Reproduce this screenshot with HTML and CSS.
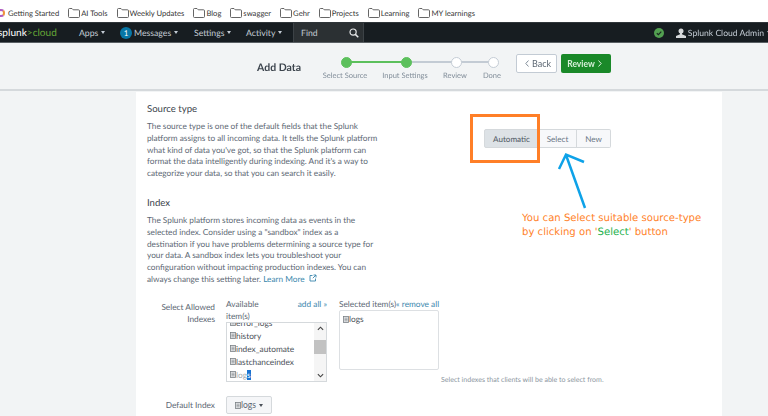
FILE: index.html
```html
<!DOCTYPE html>
<html lang="en">
<head>
<meta charset="utf-8">
<title>Add Data</title>
<link rel="stylesheet" href="styles.css">
</head>
<body>
<svg class="defs" width="0" height="0" aria-hidden="true">
  <symbol id="folder" viewBox="0 0 12 10"><path d="M.5 1.500Q.5.5 1.500.5H4L5.200 1.800H10.500Q11.500 1.800 11.500 2.800V8.500Q11.500 9.500 10.500 9.500H1.500Q.5 9.500.5 8.500Z" fill="none" stroke="#555" stroke-width=".9"/></symbol>
  <symbol id="doc" viewBox="0 0 6 7"><rect x=".5" y=".5" width="5" height="6" fill="#e4e6e8" stroke="#7a8085" stroke-width=".8"/><path d="M1.500 2.200h3M1.500 3.500h3M1.500 4.800h3" stroke="#7a8085" stroke-width=".6"/></symbol>
</svg>
<div class="bookmarks">
  <span class="mark first"><span class="ring"></span>Getting Started</span>
  <span class="mark"><svg class="folder"><use href="#folder"/></svg>AI Tools</span>
  <span class="mark"><svg class="folder"><use href="#folder"/></svg>Weekly Updates</span>
  <span class="mark"><svg class="folder"><use href="#folder"/></svg>Blog</span>
  <span class="mark"><svg class="folder"><use href="#folder"/></svg>swagger</span>
  <span class="mark"><svg class="folder"><use href="#folder"/></svg>Gehr</span>
  <span class="mark"><svg class="folder"><use href="#folder"/></svg>Projects</span>
  <span class="mark"><svg class="folder"><use href="#folder"/></svg>Learning</span>
  <span class="mark"><svg class="folder"><use href="#folder"/></svg>MY learnings</span>
</div>
<nav class="nav">
  <span class="logo">splunk<span class="logo-green">&gt;cloud</span></span>
  <span class="nav-item apps">Apps<i class="caret"></i></span>
  <span class="nav-item msgs"><span class="badge">1</span>Messages<i class="caret"></i></span>
  <span class="nav-item settings">Settings<i class="caret"></i></span>
  <span class="nav-item activity">Activity<i class="caret"></i></span>
  <span class="find">Find
    <svg class="search" viewBox="0 0 11 11"><circle cx="4.500" cy="4.500" r="3.400" fill="none" stroke="#e8eaeb" stroke-width="1.300"/><path d="M7 7l3.200 3.200" stroke="#e8eaeb" stroke-width="1.600"/></svg>
  </span>
  <span class="nav-right">
    <svg class="ok" viewBox="0 0 10 10"><circle cx="5" cy="5" r="5" fill="#53a051"/><path d="M2.800 5.200l1.600 1.500 2.900-3.100" fill="none" stroke="#1c2a20" stroke-width="1.200"/></svg>
    <svg class="user" viewBox="0 0 10 10"><circle cx="5" cy="3" r="2.500" fill="#d5d8da"/><path d="M4 5h2v1.200L10 8v2H0V8l4-1.800Z" fill="#d5d8da"/></svg>
    <span class="nav-item">Splunk Cloud Admin<i class="caret"></i></span>
  </span>
</nav>
<header class="head">
  <h1 class="title">Add Data</h1>
  <ol class="steps">
    <li class="step done">Select Source</li>
    <li class="step current">Input Settings</li>
    <li class="step third">Review</li>
    <li class="step last">Done</li>
  </ol>
  <button class="btn back"><svg class="chevron" viewBox="0 0 4 7"><path d="M3.500.5L.8 3.500l2.700 3" fill="none" stroke="#818d99"/></svg>Back</button>
  <button class="btn review">Review<svg class="chevron" viewBox="0 0 4 7"><path d="M.5.5l2.700 3-2.700 3" fill="none" stroke="#d8f0da"/></svg></button>
</header>
<main class="panel">
  <div class="cols">
    <section class="copy">
      <h2>Source type</h2>
      <p>The source type is one of the default fields that the Splunk platform assigns to all incoming data. It tells the Splunk platform what kind of data you've got, so that the Splunk platform can format the data intelligently during indexing. And it's a way to categorize your data, so that you can search it easily.</p>
      <h2 class="second">Index</h2>
      <p>The Splunk platform stores incoming data as events in the selected index. Consider using a "sandbox" index as a destination if you have problems determining a source type for your data. A sandbox index lets you troubleshoot your configuration without impacting production indexes. You can always change this setting later. <a class="link">Learn More <svg class="ext" viewBox="0 0 8 8"><path d="M6.500 4.500V7H1V1.500H3.500M4.500 1H7V3.500M7 1L3.800 4.200" fill="none" stroke="#3a87ad" stroke-width=".9"/></svg></a></p>
    </section>
    <div class="seg">
      <span class="seg-btn on">Automatic</span><span class="seg-btn sel">Select</span><span class="seg-btn new">New</span>
    </div>
  </div>
  <div class="form-row">
    <div class="label">Select Allowed Indexes</div>
    <div class="avail">
      <div class="avail-head"><span class="avail-title">Available item(s)</span><a class="link">add all »</a></div>
      <div class="listbox">
        <div class="items">
          <div class="item cut"><svg class="doc"><use href="#doc"/></svg>error_logs</div>
          <div class="item"><svg class="doc"><use href="#doc"/></svg>history</div>
          <div class="item"><svg class="doc"><use href="#doc"/></svg>index_automate</div>
          <div class="item"><svg class="doc"><use href="#doc"/></svg>lastchanceindex</div>
          <div class="item dim"><svg class="doc"><use href="#doc"/></svg>log<span class="hl">s</span></div>
        </div>
        <div class="scroll">
          <svg class="chev" viewBox="0 0 8 5"><path d="M1 4l3-3 3 3" fill="none" stroke="#444" stroke-width="1.300"/></svg>
          <span class="thumb"></span>
          <svg class="chev" viewBox="0 0 8 5"><path d="M1 1l3 3 3-3" fill="none" stroke="#444" stroke-width="1.300"/></svg>
        </div>
      </div>
    </div>
    <div class="chosen">
      <div class="chosen-head">Selected item(s)<a class="link">« remove all</a></div>
      <div class="chosen-box"><svg class="doc"><use href="#doc"/></svg>logs</div>
    </div>
    <div class="help">Select indexes that clients will be able to select from.</div>
  </div>
  <div class="form-row default">
    <div class="label">Default Index</div>
    <button class="btn pick"><svg class="doc"><use href="#doc"/></svg>logs<i class="caret dark"></i></button>
  </div>
  <div class="callout"></div>
  <svg class="arrow" viewBox="0 0 40 60"><path d="M35 57L16 4M9 18L16 3.500l18 7.500" fill="none" stroke="#0ea2e8" stroke-width="2.500"/></svg>
  <div class="note">You can Select suitable source-type<br>by clicking on '<span class="note-green">Select</span>' button</div>
</main>
</body>
</html>
```
FILE: styles.css
```css
* { box-sizing: border-box; }
html, body { margin: 0; height: 416px; overflow: hidden; }
body { background: #f2f4f5; font-family: "Lato", "Liberation Sans", sans-serif; color: #5c6773; width: 768px; filter: blur(.3px); text-rendering: geometricPrecision; }
.defs { position: absolute; }

.bookmarks { height: 22px; background: #fff; display: flex; align-items: center; padding: 4px 0 0 0; font-family: "Lato", sans-serif; font-size: 7.650px; color: #333; }
.mark { display: inline-flex; align-items: center; margin-right: 9px; white-space: nowrap; }
.mark.first { margin-left: -3px; }
.ring { width: 8px; height: 8px; border-radius: 50%; border: 2px solid #b05cc0; border-right-color: #f0913a; margin-right: 3px; }
.folder { width: 12px; height: 10px; margin-right: 1px; }

.nav { height: 21px; background: #171d21; border-top: 1px solid #30363a; border-bottom: 1px solid #5a6064; display: flex; align-items: center; font-size: 8.700px; color: #c3cbd4; white-space: nowrap; }
.logo { font-size: 10.100px; color: #fff; margin-left: -2px; width: 81px; flex: none; }
.logo-green { color: #65a637; }
.nav-item { display: inline-flex; align-items: center; }
.apps { width: 41px; }
.msgs { width: 74px; }
.settings { width: 52px; }
.activity { width: 47px; }
.caret { width: 0; height: 0; border: 2.500px solid transparent; border-top: 3px solid #c3cbd4; border-bottom: 0; margin-left: 3px; }
.caret.dark { border-top-color: #4a5058; }
.badge { width: 12px; height: 12px; border-radius: 50%; background: #0877a6; color: #fff; font-size: 8px; display: inline-flex; align-items: center; justify-content: center; margin-right: 2px; }
.find { width: 71px; height: 19px; background: #2b3033; display: flex; align-items: center; justify-content: space-between; padding: 0 4px 0 7px; border-left: 1px solid #3c4246; border-right: 1px solid #3c4246; }
.search { width: 10px; height: 10px; }
.nav-right { margin-left: auto; margin-right: -3px; display: flex; align-items: center; font-size: 8.600px; }
.ok { width: 10px; height: 10px; margin-right: 12px; }
.user { width: 10px; height: 10px; margin-right: 2px; }

.head { height: 48px; border-bottom: 2px solid #d5d9dc; display: flex; align-items: flex-start; padding-left: 257px; }
.title { margin: 19px 0 0; font-size: 10.500px; font-weight: 700; color: #3c444d; width: 58px; flex: none; }
.steps { list-style: none; margin: 12px 7px 0 0; padding: 0; display: flex; font-size: 7.500px; color: #818d99; }
.step { position: relative; width: 60px; padding-top: 16px; text-align: center; white-space: nowrap; }
.step.third { width: 40px; }
.step.last { width: 34px; }
.step::before { content: ""; position: absolute; z-index: 1; top: 2px; left: 50%; margin-left: -4.500px; width: 9px; height: 9px; border-radius: 50%; background: #fff; border: 1px solid #c3cbd4; }
.step::after { content: ""; position: absolute; top: 6px; left: 50%; width: 60px; height: 2px; background: #c3cbd4; }
.step.last::after { display: none; }
.step.done::before, .step.current::before { background: #5cc05c; border-color: #5cc05c; }
.step.done::after { background: #5cc05c; }
.step.third::after { width: 37px; }
.step.current::after { width: 50px; }
.btn { font-family: inherit; cursor: pointer; border-radius: 2px; }
.chevron { width: 4px; height: 7px; margin: 0 3px; }
.back { margin: 11px 4px 0 0; width: 41px; height: 19px; background: #fff; border: 1px solid #c3cbd4; color: #5c6773; font-size: 9px; padding: 0; }
.review { margin-top: 11px; width: 50px; height: 19px; background: #1a8929; border: 0; color: #d8f0da; font-size: 8.500px; font-weight: 700; padding: 0; }

.panel { position: relative; margin: 1px 46px 0 136px; background: #fff; height: 326px; padding: 11px 11px 0; }
.cols { display: flex; height: 198px; }
.copy { width: 232px; flex: none; font-size: 8.250px; line-height: 11.800px; color: #5c6773; }
.copy h2 { margin: 0 0 5px; font-size: 9.600px; font-weight: 400; line-height: 13px; color: #3c444d; }
.copy h2.second { margin-top: 17px; }
.copy p { margin: 0; }
.link { color: #3a87ad; }
.ext { width: 8px; height: 8px; margin-left: 2px; }
.seg { margin: 26px 0 0 105px; display: flex; height: 19px; font-size: 8.100px; flex: none; }
.seg-btn { border: 1px solid #d5d9dc; border-left: 0; background: #f7f8fa; display: flex; align-items: center; justify-content: center; color: #6b7785; }
.seg-btn.on { width: 55px; background: #dde2e6; color: #4e5862; border-left: 1px solid #d5d9dc; border-radius: 2px 0 0 2px; }
.seg-btn.sel { width: 38px; }
.seg-btn.new { width: 34px; border-radius: 0 2px 2px 0; }

.form-row { display: flex; font-size: 8.300px; position: relative; height: 94px; }
.label { width: 68px; flex: none; text-align: right; line-height: 12px; color: #5c6773; }
.avail { margin-left: 11px; width: 101px; flex: none; margin-top: -3px; }
.avail-head { display: flex; justify-content: space-between; line-height: 12px; height: 24px; }
.avail-title { width: 50px; }
.listbox { height: 60px; border: 1px solid #d5d9dc; display: flex; overflow: hidden; }
.items { flex: 1; overflow: hidden; margin-top: -7px; padding-left: 3px; }
.item { height: 13px; display: flex; align-items: center; color: #4a5058; }
.item.dim { color: #a0a7ad; }
.hl { background: #1a73d0; color: #fff; }
.doc { width: 6px; height: 7px; flex: none; margin-right: 0; }
.scroll { width: 12px; background: #f5f5f5; display: flex; flex-direction: column; align-items: center; padding: 3px 0; }
.chev { width: 7px; height: 5px; flex: none; }
.thumb { width: 12px; height: 14px; background: #c2c2c2; margin: 9px 0 auto; }
.chosen { margin-left: 12px; width: 100px; flex: none; margin-top: -3px; }
.chosen-head { line-height: 12px; white-space: nowrap; }
.chosen-box { height: 60px; border: 1px solid #dde0e3; border-radius: 2px; padding: 2px 3px; display: flex; align-items: flex-start; line-height: 13px; color: #4a5058; }
.chosen-box .doc { margin-top: 3px; }
.help { position: absolute; left: 294px; top: 74px; font-size: 7.050px; color: #8d97a1; white-space: nowrap; }
.form-row.default { height: 20px; align-items: center; }
.pick { margin-left: 11px; width: 46px; height: 18px; background: #f5f6f8; border: 1px solid #d5d9dc; color: #5c6773; font-size: 8.600px; display: flex; align-items: center; justify-content: center; padding: 0; }

.callout { position: absolute; left: 334px; top: 22px; width: 70px; height: 49px; border: 3px solid #ff7f27; }
.arrow { position: absolute; left: 414px; top: 59px; width: 40px; height: 60px; }
.note { position: absolute; left: 386px; top: 120px; font-family: "DejaVu Sans", sans-serif; font-size: 10.100px; line-height: 14px; color: #ff7f27; white-space: nowrap; }
.note-green { color: #22b14c; }
```
